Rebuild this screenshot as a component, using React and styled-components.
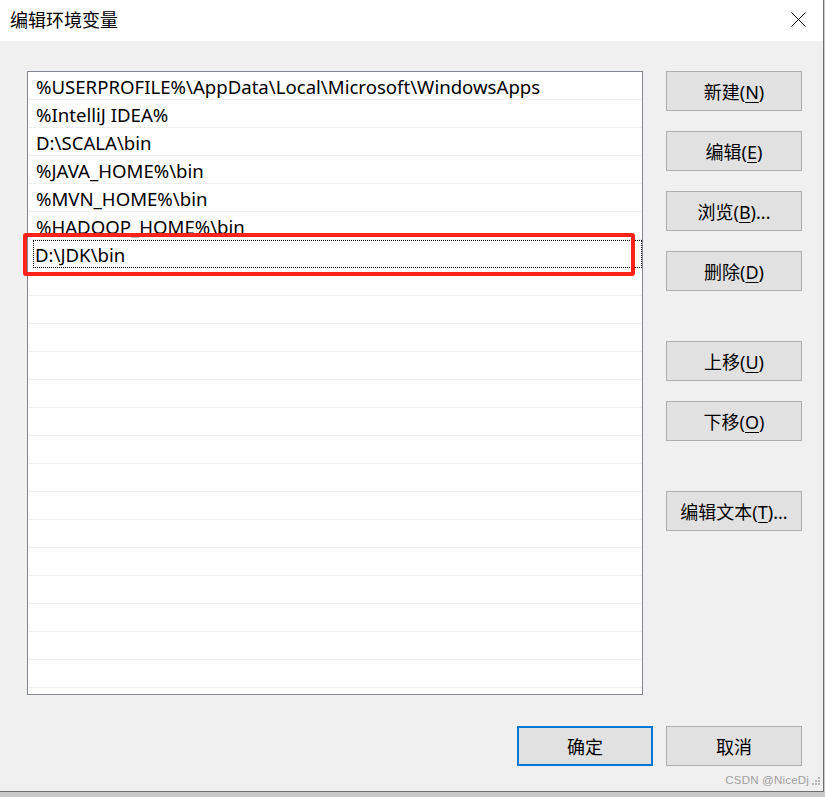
import React from 'react'
import styled, { createGlobalStyle } from 'styled-components'

const GlobalStyle = createGlobalStyle`
  html, body {
    margin: 0;
    padding: 0;
    background: #c9c9c9;
  }
  body {
    font-family: "Noto Sans", "Noto Sans CJK SC", sans-serif;
  }
`

const Window = styled.div`
  width: 823px;
  height: 791px;
  background: #f0f0f0;
  border-right: 1px solid #6e6e6e;
  border-bottom: 1px solid #6e6e6e;
  display: flex;
  flex-direction: column;
`

const TitleBar = styled.div`
  height: 41px;
  background: #fff;
  display: flex;
  align-items: center;
  justify-content: space-between;
  padding: 0 17px 3px 10px;
  box-sizing: border-box;
`

const Title = styled.div`
  font-family: "Noto Sans CJK SC", sans-serif;
  font-size: 18px;
  color: #000;
`

const Body = styled.div`
  flex: 1;
  display: flex;
  flex-direction: column;
  padding: 30px 21px 0 27px;
`

const Main = styled.div`
  display: flex;
  gap: 23px;
`

const ListArea = styled.div`
  position: relative;
`

const ListBox = styled.div`
  width: 614px;
  height: 622px;
  border: 1px solid #828790;
  background: #fff;
  overflow: hidden;
`

const Row = styled.div`
  height: 27px;
  border-bottom: 1px solid #f0f0f0;
  display: flex;
  align-items: center;
  padding-top: 1px;
  box-sizing: border-box;
  height: 28px;
  font-size: 18.6px;
  color: #000;
  white-space: nowrap;
  outline: ${({ focused }) => (focused ? '1px dotted #000' : 'none')};
  outline-offset: -1px;
  margin-left: ${({ focused }) => (focused ? '5px' : '1px')};
  padding-left: ${({ focused }) => (focused ? '2px' : '7px')};
`

const Highlight = styled.div`
  position: absolute;
  left: -4px;
  top: 162px;
  width: 612px;
  height: 43px;
  box-sizing: border-box;
  border: 4px solid #ff2218;
  border-radius: 3px;
  pointer-events: none;
`

const ButtonColumn = styled.div`
  display: flex;
  flex-direction: column;
`

const Button = styled.button`
  width: 136px;
  height: 40px;
  margin-top: ${({ gap }) => gap || 0}px;
  background: #e1e1e1;
  border: ${({ primary }) => (primary ? '2px solid #0078d7' : '1px solid #adadad')};
  font-family: "Noto Sans", "Noto Sans CJK SC", sans-serif;
  font-size: 18px;
  color: #000;
  padding: 0;
  display: flex;
  align-items: center;
  justify-content: center;
  box-sizing: border-box;
`

const Key = styled.span`
  text-decoration: underline;
  text-underline-offset: 3px;
  text-decoration-thickness: 1px;
`

const Footer = styled.div`
  display: flex;
  justify-content: flex-end;
  gap: 13px;
  margin-top: 31px;
`

const Watermark = styled.div`
  align-self: flex-end;
  margin-top: 8px;
  margin-right: -19px;
  font-family: "Liberation Sans", Arial, sans-serif;
  font-size: 11.5px;
  letter-spacing: 0.2px;
  color: #a0a0a0;
  display: flex;
  align-items: center;
  gap: 1px;
`

const paths = [
  '%USERPROFILE%\\AppData\\Local\\Microsoft\\WindowsApps',
  '%IntelliJ IDEA%',
  'D:\\SCALA\\bin',
  '%JAVA_HOME%\\bin',
  '%MVN_HOME%\\bin',
  '%HADOOP_HOME%\\bin',
  'D:\\JDK\\bin',
]

const rows = [...paths, ...Array(15).fill('')]

const Label = ({ text, k, tail }) => (
  <span>
    {text}(<Key>{k}</Key>){tail}
  </span>
)

const CloseIcon = () => (
  <svg width="15" height="15" viewBox="0 0 15 15">
    <path d="M0.5 0.5L14.5 14.5M14.5 0.5L0.5 14.5" stroke="#000" strokeWidth="1" fill="none" />
  </svg>
)

const Grip = () => (
  <svg width="11" height="11" viewBox="0 0 11 11">
    {[[8, 2], [5, 5], [8, 5], [2, 8], [5, 8], [8, 8]].map(([x, y]) => (
      <rect key={`${x}-${y}`} x={x} y={y} width="2" height="2" fill="#b4b4b4" />
    ))}
  </svg>
)

export default function App() {
  return (
    <>
      <GlobalStyle />
      <Window>
        <TitleBar>
          <Title>编辑环境变量</Title>
          <CloseIcon />
        </TitleBar>
        <Body>
          <Main>
            <ListArea>
              <ListBox>
                {rows.map((p, i) => (
                  <Row key={i} focused={i === 6}>
                    {p}
                  </Row>
                ))}
              </ListBox>
              <Highlight />
            </ListArea>
            <ButtonColumn>
              <Button><Label text="新建" k="N" /></Button>
              <Button gap={20}><Label text="编辑" k="E" /></Button>
              <Button gap={20}><Label text="浏览" k="B" tail="..." /></Button>
              <Button gap={20}><Label text="删除" k="D" /></Button>
              <Button gap={50}><Label text="上移" k="U" /></Button>
              <Button gap={20}><Label text="下移" k="O" /></Button>
              <Button gap={50}><Label text="编辑文本" k="T" tail="..." /></Button>
            </ButtonColumn>
          </Main>
          <Footer>
            <Button primary>确定</Button>
            <Button>取消</Button>
          </Footer>
          <Watermark>
            CSDN @NiceDj
            <Grip />
          </Watermark>
        </Body>
      </Window>
    </>
  )
}
